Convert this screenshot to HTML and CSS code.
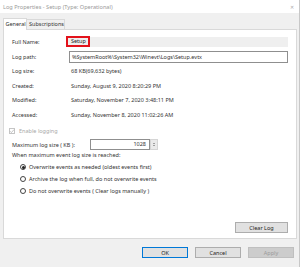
FILE: index.html
```html
<!DOCTYPE html>
<html>
<head>
<meta charset="utf-8">
<link rel="stylesheet" href="styles.css">
</head>
<body>
<div class="window">
  <div class="titlebar">
    <span class="title">Log Properties - Setup (Type: Operational)</span>
    <span class="close">✕</span>
  </div>
  <div class="content">
    <div class="tabs">
      <div class="tab active">General</div>
      <div class="tab">Subscriptions</div>
    </div>
    <div class="panel">
      <div class="row r-name">
        <span class="label">Full Name:</span>
        <span class="namefield"><span class="highlight">Setup</span></span>
      </div>
      <div class="row r-path">
        <span class="label">Log path:</span>
        <span class="pathbox">%SystemRoot%\System32\Winevt\Logs\Setup.evtx</span>
      </div>
      <div class="row r-size">
        <span class="label">Log size:</span>
        <span class="value">68 KB(69,632 bytes)</span>
      </div>
      <div class="row r-created">
        <span class="label">Created:</span>
        <span class="value">Sunday, August 9, 2020 8:20:29 PM</span>
      </div>
      <div class="row r-modified">
        <span class="label">Modified:</span>
        <span class="value">Saturday, November 7, 2020 3:48:11 PM</span>
      </div>
      <div class="row r-accessed">
        <span class="label">Accessed:</span>
        <span class="value">Sunday, November 8, 2020 11:02:26 AM</span>
      </div>
      <div class="check-row">
        <span class="checkbox"><svg width="6" height="6" viewBox="0 0 6 6"><path d="M1 3.2 L2.4 4.6 L5 1.6" fill="none" stroke="#b5b5b5" stroke-width="0.8"/></svg></span>
        <span class="disabled-text">Enable logging</span>
      </div>
      <div class="max-row">
        <span class="max-label">Maximum log size ( KB ):</span>
        <span class="numbox">1028</span>
        <span class="spinner"><span class="arrow up"></span><span class="arrow down"></span></span>
      </div>
      <div class="when-row">When maximum event log size is reached:</div>
      <div class="radio-row"><span class="radio checked"></span><span>Overwrite events as needed (oldest events first)</span></div>
      <div class="radio-row"><span class="radio"></span><span>Archive the log when full, do not overwrite events</span></div>
      <div class="radio-row"><span class="radio"></span><span>Do not overwrite events ( Clear logs manually )</span></div>
      <div class="clear-row"><span class="btn clear">Clear Log</span></div>
    </div>
    <div class="footer">
      <span class="btn ok">OK</span>
      <span class="btn">Cancel</span>
      <span class="btn disabled">Apply</span>
    </div>
  </div>
</div>
</body>
</html>
```
FILE: styles.css
```css
html, body {
  margin: 0;
  padding: 0;
}
body {
  width: 300px;
  height: 267px;
  overflow: hidden;
  font-family: "Noto Sans", "Open Sans", sans-serif;
  font-size: 5.5px;
  color: #333;
  background: #f0f0f0;
}
.window {
  width: 299px;
  height: 267px;
  border-right: 1px solid #c8c8c8;
  display: flex;
  flex-direction: column;
}
.titlebar {
  flex: none;
  height: 13px;
  background: #fff;
  display: flex;
  align-items: center;
  justify-content: space-between;
  padding: 0 5px 0 3px;
}
.title {
  color: #9a9a9a;
  font-size: 5.6px;
}
.close {
  color: #aaa;
  font-size: 5px;
}
.content {
  flex: none;
  height: 254px;
  box-sizing: border-box;
  background: #f0f0f0;
  padding: 5px 2px 0 3px;
  display: flex;
  flex-direction: column;
}
.tabs {
  flex: none;
  display: flex;
  align-items: flex-end;
  height: 11px;
  position: relative;
  z-index: 1;
}
.tab {
  height: 9px;
  line-height: 9px;
  padding: 0 2px;
  border: 1px solid #d9d9d9;
  border-bottom: none;
  background: #f0f0f0;
  color: #333;
}
.tab.active {
  height: 11px;
  line-height: 10px;
  background: #fff;
  width: 19px;
  padding: 0 1.5px;
  margin-bottom: -1px;
}
.tab + .tab {
  border-left: none;
  width: 33px;
}
.panel {
  flex: none;
  height: 210px;
  background: #fff;
  border: 1px solid #d9d9d9;
  box-sizing: border-box;
  padding: 6px 8px 0 8px;
  display: flex;
  flex-direction: column;
}
.panel > * {
  flex: none;
}
.row {
  display: flex;
  align-items: center;
}
.label {
  width: 54px;
  flex: none;
}
.r-name { height: 11px; }
.r-path { height: 12px; margin-top: 4px; }
.r-size { height: 15px; }
.r-created { height: 15px; }
.r-modified { height: 14px; }
.r-accessed { height: 16px; }
.namefield {
  flex: 1;
  height: 10px;
  background: #efefef;
  display: flex;
  align-items: center;
}
.highlight {
  height: 11px;
  box-sizing: border-box;
  border: 2px solid #e3121b;
  padding: 0 2px 0 3px;
  line-height: 7px;
  color: #222;
}
.pathbox {
  flex: 1;
  margin-left: 3px;
  height: 12px;
  box-sizing: border-box;
  border: 1px solid #8f8f8f;
  line-height: 10px;
  padding-left: 2px;
}
.value {
  padding-left: 5px;
}
.check-row {
  display: flex;
  align-items: center;
  height: 16px;
  margin-left: -3px;
}
.checkbox {
  width: 6px;
  height: 6px;
  border: 1px solid #c5c5c5;
  box-sizing: border-box;
  display: flex;
  align-items: center;
  justify-content: center;
  margin-right: 4px;
}
.checkbox svg { flex: none; }
.disabled-text {
  color: #a8a8a8;
}
.max-row {
  display: flex;
  align-items: center;
  height: 11px;
}
.max-label {
  width: 78px;
}
.numbox {
  width: 60px;
  height: 11px;
  box-sizing: border-box;
  border: 1px solid #8f8f8f;
  text-align: right;
  line-height: 9px;
  padding-right: 3px;
}
.spinner {
  width: 8px;
  height: 11px;
  box-sizing: border-box;
  background: #eaeaea;
  border: 1px solid #d5d5d5;
  display: flex;
  flex-direction: column;
  align-items: center;
  justify-content: center;
  gap: 1px;
}
.arrow {
  width: 0;
  height: 0;
  border-left: 1.5px solid transparent;
  border-right: 1.5px solid transparent;
}
.arrow.up { border-bottom: 1.5px solid #555; }
.arrow.down { border-top: 1.5px solid #555; }
.when-row {
  height: 11px;
  line-height: 11px;
}
.radio-row {
  display: flex;
  align-items: center;
  height: 12px;
  padding-left: 8px;
}
.radio {
  flex: none;
  width: 6px;
  height: 6px;
  box-sizing: border-box;
  border: 0.8px solid #444;
  border-radius: 50%;
  margin-right: 3px;
  display: flex;
  align-items: center;
  justify-content: center;
}
.radio.checked::after {
  content: "";
  width: 3px;
  height: 3px;
  border-radius: 50%;
  background: #222;
}
.clear-row {
  display: flex;
  justify-content: flex-end;
  margin-top: 25px;
}
.btn {
  height: 11px;
  box-sizing: border-box;
  border: 1px solid #adadad;
  background: #e1e1e1;
  display: flex;
  align-items: center;
  justify-content: center;
  color: #222;
}
.btn.clear {
  width: 53px;
}
.footer {
  flex: none;
  display: flex;
  justify-content: flex-end;
  gap: 7px;
  padding-right: 3px;
  margin-top: 8px;
}
.footer .btn {
  width: 46px;
}
.btn.ok {
  border: 1px solid #0078d7;
}
.btn.disabled {
  background: #cccccc;
  border-color: #bfbfbf;
  color: #9a9a9a;
}
```
